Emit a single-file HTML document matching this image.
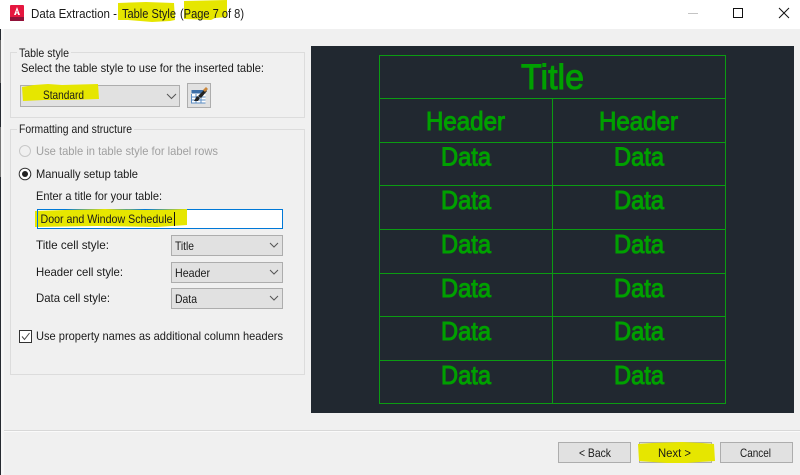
<!DOCTYPE html>
<html><head><meta charset="utf-8"><title>Data Extraction - Table Style</title>
<style>
html,body{margin:0;padding:0;width:800px;height:475px;overflow:hidden;background:#f0f0f0}
svg{display:block}
text{font-family:"Liberation Sans",sans-serif;font-size:12px;fill:#1a1a1a}
.t{font-size:12.5px}
.g{fill:#00a000;stroke:#00a000;stroke-width:1px}
.d{font-size:26px}
</style></head><body>
<svg width="800" height="475" viewBox="0 0 800 475" xmlns="http://www.w3.org/2000/svg">
<rect width="800" height="475" fill="#f0f0f0"/>
<rect width="800" height="29" fill="#fff"/>
<!-- left window edge -->
<rect x="1" y="29" width="3" height="446" fill="#f6f6f6"/>
<rect x="0" y="29" width="1" height="446" fill="#262a30"/>
<rect x="0" y="40" width="1" height="43" fill="#6a6a6a"/>
<rect x="0" y="127" width="1" height="50" fill="#777"/>
<!-- title icon -->
<path d="M11 5h12a1 1 0 0 1 1 1v15h-14v-15a1 1 0 0 1 1-1z" fill="#e5173f"/>
<path d="M10 17h14v3a1 1 0 0 1-1 1h-12a1 1 0 0 1-1-1z" fill="#8f1239"/>
<path d="M14 15l3-8 3 8h-1.800l-.5-1.600h-1.400l-.5 1.600zM16.300 12.400h1.400l-.7-2.300z" fill="#fff"/>
<!-- title highlights -->
<path d="M118 3l28-1 28 1 1 17-5 1-18 1-24-2-10 0z" fill="#e6e600"/>
<path d="M184 1l43-1 0 17-12 1-4 2-27-1z" fill="#e6e600"/>
<text class="t" x="31" y="18" textLength="86" lengthAdjust="spacingAndGlyphs">Data Extraction -</text>
<text class="t" x="122" y="18" textLength="54" lengthAdjust="spacingAndGlyphs">Table Style</text>
<text class="t" x="180" y="18" textLength="64" lengthAdjust="spacingAndGlyphs">(Page 7 of 8)</text>
<!-- window controls -->
<path d="M688 13.500h10" stroke="#c4c4c4" fill="none"/>
<rect x="733.500" y="8.500" width="9" height="9" fill="none" stroke="#111"/>
<path d="M779 8l10 10M789 8l-10 10" stroke="#111" fill="none"/>

<!-- group 1 -->
<rect x="10.500" y="52.500" width="294" height="65" fill="none" stroke="#dcdcdc"/>
<rect x="17" y="48" width="54" height="9" fill="#f0f0f0"/>
<text x="19" y="57" textLength="50" lengthAdjust="spacingAndGlyphs">Table style</text>
<text x="21" y="72" textLength="243" lengthAdjust="spacingAndGlyphs">Select the table style to use for the inserted table:</text>
<rect x="20.500" y="85.500" width="159" height="21" fill="#e1e1e1" stroke="#adadad"/>
<path d="M22 87l12-2 14-1 14 1 36-1 1 15-30 1-25 0-21 1z" fill="#e6e600"/>
<text x="43" y="99" textLength="41" lengthAdjust="spacingAndGlyphs">Standard</text>
<path d="M167 94l4.500 4.500 4.500-4.500" fill="none" stroke="#555"/>
<rect x="187.500" y="83.500" width="23" height="24" fill="#e1e1e1" stroke="#adadad"/>
<rect x="191.500" y="90" width="14" height="13" fill="#fff"/>
<rect x="191.500" y="90" width="14" height="3.500" fill="#3b6ea8"/>
<path d="M191.500 94v9h14M196 94v9M201 94v9M191.500 97h14M191.500 100h14" stroke="#5b8dc4" fill="none"/>
<path d="M194 101l3-5 3 2-2 3z" fill="#222"/>
<path d="M198 96l7-7 2 2-6 7z" fill="#222"/>
<path d="M203 90l3-3 2 2-3 3z" fill="#c9853a"/>

<!-- group 2 -->
<rect x="10.500" y="129.500" width="294" height="245" fill="none" stroke="#dcdcdc"/>
<rect x="17" y="125" width="117" height="9" fill="#f0f0f0"/>
<text x="19" y="133" textLength="113" lengthAdjust="spacingAndGlyphs">Formatting and structure</text>
<circle cx="25" cy="151" r="5.500" fill="#f0f0f0" stroke="#c8c8c8"/>
<text x="36" y="155" textLength="182" lengthAdjust="spacingAndGlyphs" style="fill:#a0a0a0">Use table in table style for label rows</text>
<circle cx="25" cy="174" r="5.800" fill="#fff" stroke="#333"/>
<circle cx="25" cy="174" r="3" fill="#222"/>
<text x="36" y="178" textLength="102" lengthAdjust="spacingAndGlyphs">Manually setup table</text>
<text x="36" y="200" textLength="126" lengthAdjust="spacingAndGlyphs">Enter a title for your table:</text>
<rect x="37.500" y="209.500" width="245" height="19" fill="#fff" stroke="#0078d7"/>
<path d="M35 211l30-1 40-1 40 1 42-1 0 16-30 2-60-1-62 1z" fill="#e6e600"/>
<path d="M37.500 209.500v19h2" fill="none" stroke="#0078d7"/>
<text x="40.500" y="223" textLength="132" lengthAdjust="spacingAndGlyphs">Door and Window Schedule</text>
<path d="M174.500 212v14" stroke="#111"/>

<text x="36" y="249" textLength="73" lengthAdjust="spacingAndGlyphs">Title cell style:</text>
<rect x="171.500" y="235.500" width="111" height="20" fill="#e1e1e1" stroke="#adadad"/>
<text x="175" y="250" textLength="19" lengthAdjust="spacingAndGlyphs">Title</text>
<path d="M270 243l4 4 4-4" fill="none" stroke="#555"/>

<text x="36" y="276" textLength="87" lengthAdjust="spacingAndGlyphs">Header cell style:</text>
<rect x="171.500" y="262.500" width="111" height="20" fill="#e1e1e1" stroke="#adadad"/>
<text x="175" y="277" textLength="35" lengthAdjust="spacingAndGlyphs">Header</text>
<path d="M270 270l4 4 4-4" fill="none" stroke="#555"/>

<text x="36" y="302" textLength="74" lengthAdjust="spacingAndGlyphs">Data cell style:</text>
<rect x="171.500" y="288.500" width="111" height="20" fill="#e1e1e1" stroke="#adadad"/>
<text x="175" y="303" textLength="22" lengthAdjust="spacingAndGlyphs">Data</text>
<path d="M270 296l4 4 4-4" fill="none" stroke="#555"/>

<rect x="19.500" y="330.500" width="12" height="12" fill="#fff" stroke="#333"/>
<path d="M22 336.500l2.500 3 5-6.500" fill="none" stroke="#444"/>
<text x="36" y="340" textLength="247" lengthAdjust="spacingAndGlyphs">Use property names as additional column headers</text>

<!-- preview -->
<rect x="311" y="46" width="483" height="367" fill="#212830"/>
<g fill="none" stroke="#0b9c12">
<rect x="379.500" y="55.500" width="346" height="348"/>
<path d="M380 98.500h345M380 142.500h345M380 185.500h345M380 229.500h345M380 273.500h345M380 316.500h345M380 360.500h345M552.500 99v304"/>
</g>
<g>
<text class="g" x="521" y="89" textLength="63" lengthAdjust="spacingAndGlyphs" style="font-size:35px">Title</text>
<text class="g d" x="426" y="130" textLength="79" lengthAdjust="spacingAndGlyphs">Header</text>
<text class="g d" x="599" y="130" textLength="79" lengthAdjust="spacingAndGlyphs">Header</text>
<text class="g d" x="441" y="165.500" textLength="50" lengthAdjust="spacingAndGlyphs">Data</text>
<text class="g d" x="614" y="165.500" textLength="50" lengthAdjust="spacingAndGlyphs">Data</text>
<text class="g d" x="441" y="209" textLength="50" lengthAdjust="spacingAndGlyphs">Data</text>
<text class="g d" x="614" y="209" textLength="50" lengthAdjust="spacingAndGlyphs">Data</text>
<text class="g d" x="441" y="253" textLength="50" lengthAdjust="spacingAndGlyphs">Data</text>
<text class="g d" x="614" y="253" textLength="50" lengthAdjust="spacingAndGlyphs">Data</text>
<text class="g d" x="441" y="297" textLength="50" lengthAdjust="spacingAndGlyphs">Data</text>
<text class="g d" x="614" y="297" textLength="50" lengthAdjust="spacingAndGlyphs">Data</text>
<text class="g d" x="441" y="340" textLength="50" lengthAdjust="spacingAndGlyphs">Data</text>
<text class="g d" x="614" y="340" textLength="50" lengthAdjust="spacingAndGlyphs">Data</text>
<text class="g d" x="441" y="384" textLength="50" lengthAdjust="spacingAndGlyphs">Data</text>
<text class="g d" x="614" y="384" textLength="50" lengthAdjust="spacingAndGlyphs">Data</text>
</g>

<!-- footer -->
<path d="M4 430.500h796" stroke="#d8d8d8"/>
<path d="M4 431.500h796" stroke="#fafafa"/>
<rect x="558.500" y="442.500" width="72" height="20" fill="#e1e1e1" stroke="#adadad"/>
<text x="579" y="457" textLength="32" lengthAdjust="spacingAndGlyphs">&lt; Back</text>
<rect x="639.500" y="442.500" width="72" height="20" fill="#e1e1e1" stroke="#adadad"/>
<path d="M638 444l14-1 30-1 20 1 12 1 1 17-16 1-12 1-20 0-28-2z" fill="#e6e600"/>
<text x="658" y="457" textLength="33" lengthAdjust="spacingAndGlyphs">Next &gt;</text>
<rect x="720.500" y="442.500" width="72" height="20" fill="#e1e1e1" stroke="#adadad"/>
<text x="740" y="457" textLength="31" lengthAdjust="spacingAndGlyphs">Cancel</text>
</svg>
</body></html>
